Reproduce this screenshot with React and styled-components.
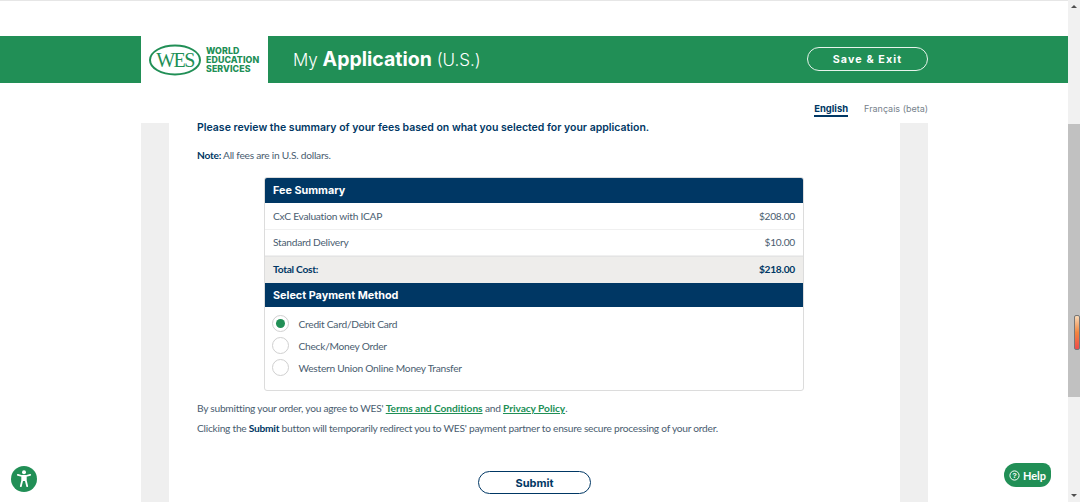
import styled, { createGlobalStyle } from 'styled-components';

const GlobalStyle = createGlobalStyle`
  html, body {
    margin: 0;
    padding: 0;
    height: 100%;
    overflow: hidden;
    background: #fff;
  }
  body {
    font-family: "Lato", "Noto Sans", sans-serif;
    font-size: 10.2px;
    letter-spacing: -0.25px;
    color: #4a5d70;
  }
`;

const Page = styled.div`
  display: flex;
  height: 502px;
  width: 1080px;
  overflow: hidden;
  position: relative;
`;

const Main = styled.div`
  flex: 1;
  min-width: 0;
  padding-top: 36px;
  border-top: 1px solid #e6e6e6;
  box-sizing: border-box;
  overflow: hidden;
`;

const HeaderBand = styled.header`
  height: 47px;
  margin-top: -1px;
  background: #218f56;
`;

const HeaderInner = styled.div`
  width: 787px;
  margin-left: 141px;
  height: 100%;
  display: flex;
  align-items: center;
`;

const LogoBox = styled.div`
  width: 127px;
  height: 100%;
  background: #fff;
  display: flex;
  align-items: center;
  padding-left: 8px;
  box-sizing: border-box;
  flex-shrink: 0;
`;

const LogoWords = styled.div`
  margin-left: 5px;
  font-family: "Inter", sans-serif;
  font-size: 8.8px;
  line-height: 9px;
  font-weight: 800;
  letter-spacing: 0.1px;
  color: #218f56;
`;

const AppTitle = styled.h1`
  flex: 1;
  margin: -2px 0 0 25px;
  font-family: "Inter", sans-serif;
  font-size: 17px;
  font-weight: 300;
  letter-spacing: 0;
  color: #fff;
  white-space: nowrap;

  strong {
    font-size: 19.5px;
    font-weight: 700;
  }
`;

const SaveButton = styled.button`
  width: 121px;
  height: 24px;
  margin-top: -1px;
  border: 1.5px solid #e8f4ec;
  border-radius: 12px;
  background: transparent;
  color: #fff;
  font-family: "Inter", sans-serif;
  font-size: 10.7px;
  font-weight: 700;
  letter-spacing: 1.1px;
  padding: 0;
`;

const LangBar = styled.nav`
  width: 787px;
  margin-left: 141px;
  height: 40px;
  display: flex;
  justify-content: flex-end;
  gap: 16px;
  align-items: flex-start;
  padding-top: 20px;
  box-sizing: border-box;
  font-family: "Inter", sans-serif;
  letter-spacing: 0;
`;

const LangLink = styled.span`
  font-size: ${(p) => (p.$active ? '9.45px' : '9px')};
  color: ${(p) => (p.$active ? '#003764' : '#77828c')};
  font-weight: ${(p) => (p.$active ? 700 : 400)};
  border-bottom: ${(p) => (p.$active ? '2px solid #003764' : '2px solid transparent')};
  line-height: 12px;
`;

const Shell = styled.div`
  display: flow-root;
  margin-left: 141px;
  border-left: 28px solid #efefef;
  border-right: 28px solid #efefef;
  height: 379px;
  padding: 0 28px;
  box-sizing: content-box;
  width: 675px;
`;

const Lead = styled.p`
  margin: -2px 0 0;
  font-family: "Inter", sans-serif;
  font-size: 10.5px;
  line-height: 14px;
  font-weight: 600;
  letter-spacing: 0;
  color: #003764;
`;

const Note = styled.p`
  margin: 13px 0 0;
  line-height: 14px;

  strong {
    color: #003764;
    font-weight: 700;
  }
`;

const FeeCard = styled.section`
  width: 540px;
  margin: 15px 0 0 67px;
  border: 1px solid #dcdcdc;
  border-radius: 3px;
  overflow: hidden;
  box-sizing: border-box;
`;

const CardHead = styled.div`
  background: #003764;
  color: #fff;
  font-family: "Inter", sans-serif;
  font-size: 10.8px;
  font-weight: 700;
  letter-spacing: 0;
  height: ${(p) => p.$h}px;
  display: flex;
  align-items: center;
  padding-left: 8px;
`;

const FeeRow = styled.div`
  height: 26.5px;
  display: flex;
  justify-content: space-between;
  align-items: center;
  padding: 0 8px;
  border-bottom: 1px solid #f0f0f0;
  box-sizing: border-box;
`;

const TotalRow = styled(FeeRow)`
  height: 27px;
  padding-bottom: 2px;
  border-bottom: 0;
  border-top: 1px solid #e4e4e4;
  background: #eeedeb;
  color: #003764;
  font-weight: 700;
`;

const MethodList = styled.div`
  display: flex;
  flex-direction: column;
  padding: 8px 7px 14px;
  gap: 5px;
`;

const MethodRow = styled.label`
  display: flex;
  align-items: center;
  gap: 9.5px;
  height: 17px;
`;

const RadioDot = styled.span`
  width: 17px;
  height: 17px;
  border: 1.5px solid #d0d0d0;
  border-radius: 50%;
  display: flex;
  align-items: center;
  justify-content: center;
  flex-shrink: 0;
  box-sizing: border-box;

  &::after {
    content: '';
    display: ${(p) => (p.$on ? 'block' : 'none')};
    width: 9px;
    height: 9px;
    border-radius: 50%;
    background: #218f56;
  }
`;

const Legal = styled.p`
  margin: ${(p) => p.$top}px 0 0;
  line-height: 14px;

  strong {
    color: #003764;
  }

  a {
    color: #218f56;
    font-weight: 700;
    letter-spacing: -0.05px;
    text-decoration: underline;
  }
`;

const SubmitWrap = styled.div`
  display: flex;
  justify-content: center;
  margin-top: 36px;
`;

const SubmitButton = styled.button`
  width: 113px;
  height: 23px;
  border: 1.5px solid #003764;
  border-radius: 12px;
  background: #fff;
  color: #003764;
  font-family: "Inter", sans-serif;
  font-size: 11px;
  font-weight: 700;
  padding: 0;
`;

const ScrollRail = styled.aside`
  width: 12px;
  height: 502px;
  background: #f1f1f1;
  flex-shrink: 0;
  position: relative;
`;

const ScrollThumb = styled.div`
  position: absolute;
  left: 0;
  right: 0;
  top: 124px;
  height: 273px;
  background: #c1c1c1;
`;

const ScrollMark = styled.div`
  position: absolute;
  left: 6px;
  top: 315px;
  width: 4px;
  height: 33px;
  border: 1px solid #777;
  border-radius: 2px;
  background: linear-gradient(#f7d9b8, #f2853f 50%, #ee4b4b);
`;

const ScrollArrow = styled.div`
  position: absolute;
  left: 3px;
  ${(p) => (p.$up ? 'top: 5px;' : 'bottom: 5px;')}
  border-left: 3px solid transparent;
  border-right: 3px solid transparent;
  ${(p) => (p.$up ? 'border-bottom: 3px solid #505050;' : 'border-top: 3px solid #505050;')}
`;

const A11yBadge = styled.div`
  position: absolute;
  left: 11px;
  top: 466px;
  width: 26px;
  height: 26px;
  border-radius: 50%;
  background: #218f56;
  display: flex;
  align-items: center;
  justify-content: center;
`;

const HelpBadge = styled.div`
  position: absolute;
  left: 1004px;
  top: 463px;
  width: 47px;
  height: 24px;
  border-radius: 12px 8px 11px 12px;
  background: #218f56;
  color: #fff;
  display: flex;
  align-items: center;
  justify-content: center;
  gap: 3px;
  font-size: 11px;
  font-weight: 700;
  letter-spacing: 0;
`;

const WesLogo = () => (
  <svg width="52" height="32" viewBox="0 0 52 32">
    <ellipse cx="26" cy="16" rx="25" ry="14.5" fill="none" stroke="#218f56" strokeWidth="2" />
    <text x="26" y="22.5" textAnchor="middle" fontFamily="Liberation Serif" fontSize="20" letterSpacing="-1.6" fill="#218f56">WES</text>
  </svg>
);

const A11yIcon = () => (
  <svg width="20" height="20" viewBox="0 0 20 20">
    <circle cx="10" cy="3.2" r="2" fill="#fff" />
    <path d="M3.8 5.8 L8 7 H12 L16.2 5.8 M8.2 7 V11.5 L6.8 17.2 M11.8 7 V11.5 L13.2 17.2" fill="none" stroke="#fff" strokeWidth="1.8" strokeLinecap="round" strokeLinejoin="round" />
    <path d="M8 7 H12 V12 H8 Z" fill="#fff" />
  </svg>
);

const HelpIcon = () => (
  <svg width="11" height="11" viewBox="0 0 11 11">
    <circle cx="5.5" cy="5.5" r="4.6" fill="none" stroke="#fff" strokeWidth="1" />
    <text x="5.5" y="8.2" textAnchor="middle" fontFamily="Liberation Sans" fontSize="7.5" fontWeight="700" fill="#fff">?</text>
  </svg>
);

const App = () => (
  <Page>
    <GlobalStyle />
    <Main>
      <HeaderBand>
        <HeaderInner>
          <LogoBox>
            <WesLogo />
            <LogoWords>
              WORLD<br />EDUCATION<br />SERVICES
            </LogoWords>
          </LogoBox>
          <AppTitle>
            My <strong>Application</strong> (U.S.)
          </AppTitle>
          <SaveButton>Save &amp; Exit</SaveButton>
        </HeaderInner>
      </HeaderBand>
      <LangBar>
        <LangLink $active>English</LangLink>
        <LangLink>Français (beta)</LangLink>
      </LangBar>
      <Shell>
        <Lead>Please review the summary of your fees based on what you selected for your application.</Lead>
        <Note>
          <strong>Note:</strong> All fees are in U.S. dollars.
        </Note>
        <FeeCard>
          <CardHead $h={25}>Fee Summary</CardHead>
          <FeeRow>
            <span>CxC Evaluation with ICAP</span>
            <span>$208.00</span>
          </FeeRow>
          <FeeRow>
            <span>Standard Delivery</span>
            <span>$10.00</span>
          </FeeRow>
          <TotalRow>
            <span>Total Cost:</span>
            <span>$218.00</span>
          </TotalRow>
          <CardHead $h={24}>Select Payment Method</CardHead>
          <MethodList>
            <MethodRow>
              <RadioDot $on />
              Credit Card/Debit Card
            </MethodRow>
            <MethodRow>
              <RadioDot />
              Check/Money Order
            </MethodRow>
            <MethodRow>
              <RadioDot />
              Western Union Online Money Transfer
            </MethodRow>
          </MethodList>
        </FeeCard>
        <Legal $top={10}>
          By submitting your order, you agree to WES' <a>Terms and Conditions</a> and <a>Privacy Policy</a>.
        </Legal>
        <Legal $top={6}>
          Clicking the <strong>Submit</strong> button will temporarily redirect you to WES' payment partner to ensure secure processing of your order.
        </Legal>
        <SubmitWrap>
          <SubmitButton>Submit</SubmitButton>
        </SubmitWrap>
      </Shell>
    </Main>
    <ScrollRail>
      <ScrollArrow $up />
      <ScrollThumb />
      <ScrollMark />
      <ScrollArrow />
    </ScrollRail>
    <A11yBadge>
      <A11yIcon />
    </A11yBadge>
    <HelpBadge>
      <HelpIcon />
      Help
    </HelpBadge>
  </Page>
);

export default App;
